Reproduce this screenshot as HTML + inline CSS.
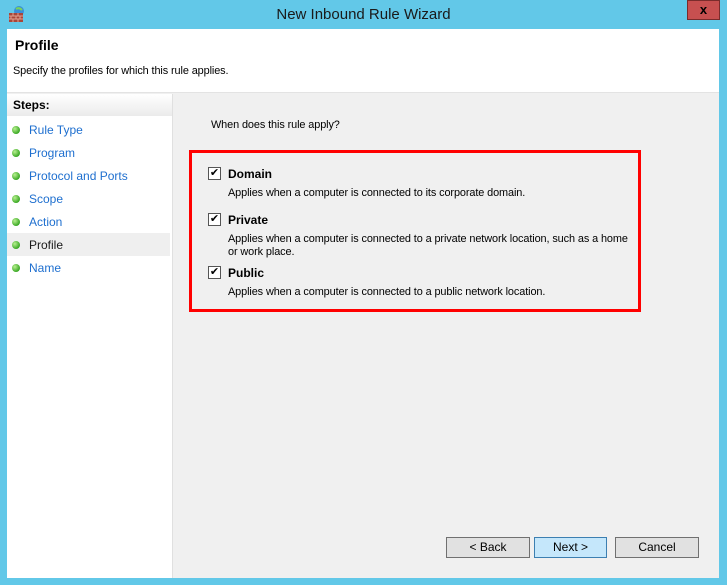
<!DOCTYPE html>
<html><head><style>
body{margin:0;width:727px;height:585px;background:#62c8e8;font-family:"Liberation Sans",sans-serif;font-size:12px;position:relative;overflow:hidden}
.a{position:absolute;white-space:nowrap}
.title{left:0;top:6px;width:727px;text-align:center;font-size:15px;color:#1a1a1a}
.close{left:687px;top:0;width:33px;height:20px;background:#c75050;border:1px solid #7a2c2c;box-sizing:border-box;color:#000;font-weight:bold;text-align:center;font-size:13px;line-height:18px}
.client{left:7px;top:29px;width:712px;height:549px;background:#f0f0f0}
.hdr{left:7px;top:29px;width:712px;height:63px;background:#fff;border-bottom:1px solid #e3e3e3}
.steps{left:7px;top:94px;width:165px;height:484px;background:#fff;border-right:1px solid #e0e0e0}
.sh{left:7px;top:94px;width:165px;height:22px;background:linear-gradient(#fff,#ebebeb);font-weight:bold;font-size:12px}
.it{left:29px;color:#1e6fcf;font-size:12px}
.dot{left:12px;width:8px;height:8px;border-radius:50%;background:radial-gradient(circle at 35% 35%,#b8f090,#3aa824 70%)}
.cb{width:11px;height:11px;border:1px solid #555;background:#fff;font-size:11px;line-height:11px;text-align:center}
.d{font-size:10.9px;letter-spacing:-0.1px}
.btn{top:537px;height:19px;border:1px solid #707070;background:#e1e1e1;text-align:center;line-height:19px;box-sizing:content-box}
</style></head><body>
<svg class="a" style="left:8px;top:5px" width="18" height="18"><circle cx="11" cy="6" r="5" fill="#3a8fd8"/><path d="M8 4q3 -2 6 1" stroke="#7ad35a" stroke-width="2" fill="none"/><rect x="1" y="8" width="14" height="9" fill="#a8463a"/><path d="M1 11h14M1 14h14M5 8v3M10 8v3M3 11v3M8 11v3M12 11v3M5 14v3M10 14v3" stroke="#e0a090" stroke-width="1"/></svg>
<div class="a title">New Inbound Rule Wizard</div>
<div class="a close">x</div>
<div class="a client"></div>
<div class="a hdr"></div>
<div class="a" style="left:15px;top:37px;font-size:14px;font-weight:bold">Profile</div>
<div class="a d" style="left:13px;top:65px">Specify the profiles for which this rule applies.</div>
<div class="a steps"></div>
<div class="a sh"><span style="position:absolute;left:6px;top:4px">Steps:</span></div>
<div class="a" style="left:7px;top:233px;width:163px;height:23px;background:#efefef"></div>
<div class="a dot" style="top:126px"></div><div class="a it" style="top:123px">Rule Type</div>
<div class="a dot" style="top:149px"></div><div class="a it" style="top:146px">Program</div>
<div class="a dot" style="top:172px"></div><div class="a it" style="top:169px">Protocol and Ports</div>
<div class="a dot" style="top:195px"></div><div class="a it" style="top:192px">Scope</div>
<div class="a dot" style="top:218px"></div><div class="a it" style="top:215px">Action</div>
<div class="a dot" style="top:241px"></div><div class="a it" style="top:238px;color:#1a1a1a">Profile</div>
<div class="a dot" style="top:264px"></div><div class="a it" style="top:261px">Name</div>
<div class="a d" style="left:211px;top:119px">When does this rule apply?</div>
<div class="a" style="left:189px;top:150px;width:446px;height:156px;border:3px solid #f00"></div>
<div class="a cb" style="left:208px;top:167px">✔</div><div class="a" style="left:228px;top:167px;font-weight:bold">Domain</div>
<div class="a d" style="left:228px;top:187px">Applies when a computer is connected to its corporate domain.</div>
<div class="a cb" style="left:208px;top:213px">✔</div><div class="a" style="left:228px;top:213px;font-weight:bold">Private</div>
<div class="a d" style="left:228px;top:233px;line-height:13px">Applies when a computer is connected to a private network location, such as a home<br>or work place.</div>
<div class="a cb" style="left:208px;top:266px">✔</div><div class="a" style="left:228px;top:266px;font-weight:bold">Public</div>
<div class="a d" style="left:228px;top:286px">Applies when a computer is connected to a public network location.</div>
<div class="a btn" style="left:446px;width:82px">&lt; Back</div>
<div class="a btn" style="left:534px;width:71px;background:#c5e7fb;border-color:#3c7fb1">Next &gt;</div>
<div class="a btn" style="left:615px;width:82px">Cancel</div>
</body></html>
